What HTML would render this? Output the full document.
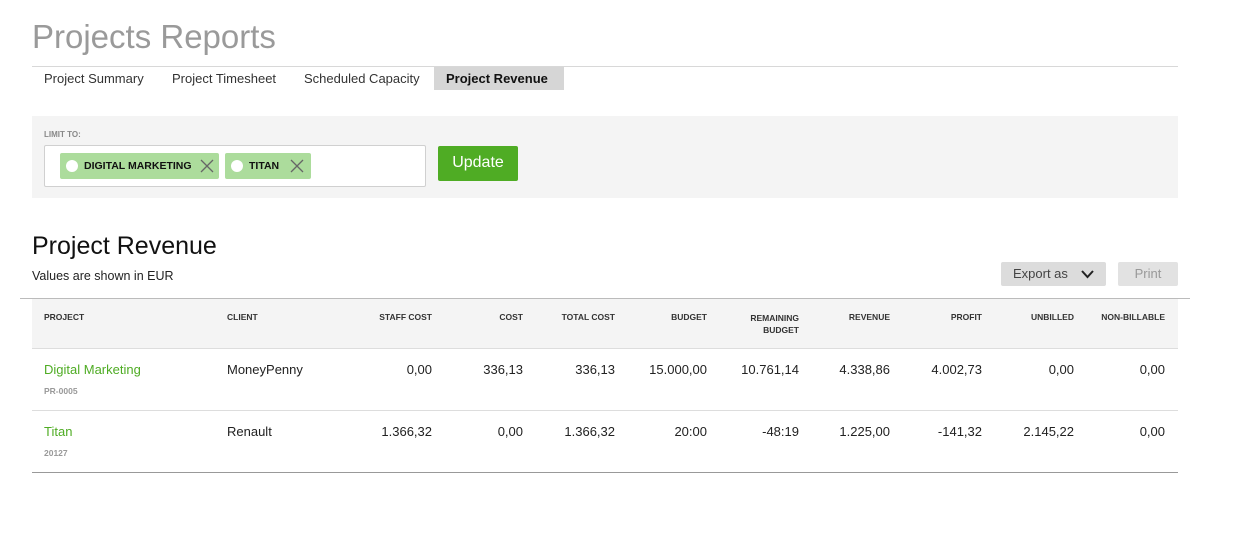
<!DOCTYPE html><html><head><style>
body{margin:0;width:1252px;height:543px;background:#fff;font-family:"Liberation Sans",sans-serif;position:relative;overflow:hidden;color:#222}
.a{position:absolute;white-space:nowrap}
.tab{top:71px;font-size:13px;color:#333}
.h{font-size:8.5px;font-weight:bold;color:#333;text-align:right;width:100px}
.c{font-size:13px;text-align:right;width:120px;color:#222}
.chip{top:153px;height:26px;background:#acdc9c;border-radius:2px}
.dot{position:absolute;left:6px;top:7px;width:12px;height:12px;border-radius:50%;background:#fff}
.ct{position:absolute;top:7px;font-size:10.5px;font-weight:bold;color:#111}
</style></head><body>
<div class="a" style="left:32px;top:18px;font-size:33px;color:#9a9a9a">Projects Reports</div>
<div class="a" style="left:32px;top:66px;width:1146px;height:1px;background:#d8d8d8"></div>
<div class="a" style="left:434px;top:67px;width:130px;height:23px;background:#d6d6d6"></div>
<div class="a tab" style="left:44px">Project Summary</div>
<div class="a tab" style="left:172px">Project Timesheet</div>
<div class="a tab" style="left:304px">Scheduled Capacity</div>
<div class="a tab" style="left:446px;font-weight:bold;color:#111">Project Revenue</div>

<div class="a" style="left:32px;top:116px;width:1146px;height:82px;background:#f4f4f4"></div>
<div class="a" style="left:44px;top:130px;font-size:8px;font-weight:bold;color:#888">LIMIT TO:</div>
<div class="a" style="left:44px;top:145px;width:380px;height:40px;background:#fff;border:1px solid #d0d0d0;border-radius:2px"></div>
<div class="a chip" style="left:60px;width:159px"><div class="dot"></div><div class="ct" style="left:24px">DIGITAL MARKETING</div>
<svg style="position:absolute;left:140px;top:6px" width="14" height="14"><path d="M1 1L13 13M13 1L1 13" stroke="#666" stroke-width="1.3"/></svg></div>
<div class="a chip" style="left:225px;width:86px"><div class="dot"></div><div class="ct" style="left:24px">TITAN</div>
<svg style="position:absolute;left:65px;top:6px" width="14" height="14"><path d="M1 1L13 13M13 1L1 13" stroke="#666" stroke-width="1.3"/></svg></div>
<div class="a" style="left:438px;top:146px;width:80px;height:35px;background:#4fac24;border-radius:2px;color:#fff;font-size:16px;text-align:center;line-height:34px">Update</div>

<div class="a" style="left:32px;top:232px;font-size:25px;color:#111">Project Revenue</div>
<div class="a" style="left:32px;top:269px;font-size:12.5px;color:#222">Values are shown in EUR</div>
<div class="a" style="left:1001px;top:262px;width:105px;height:24px;background:#dcdcdc;border-radius:2px;font-size:13px;color:#444;line-height:24px"><span style="margin-left:12px">Export as</span>
<svg style="position:absolute;left:80px;top:8px" width="13" height="9"><path d="M1 1L6.5 7L12 1" stroke="#222" stroke-width="2" fill="none"/></svg></div>
<div class="a" style="left:1118px;top:262px;width:60px;height:24px;background:#e2e2e2;border-radius:2px;font-size:13px;color:#999;line-height:24px;text-align:center">Print</div>

<div class="a" style="left:20px;top:298px;width:1170px;height:1px;background:#bbb"></div>
<div class="a" style="left:32px;top:299px;width:1146px;height:49px;background:#f4f4f4"></div>
<div class="a h" style="left:44px;top:312px;text-align:left">PROJECT</div>
<div class="a h" style="left:227px;top:312px;text-align:left">CLIENT</div>
<div class="a h" style="left:332px;top:312px">STAFF COST</div>
<div class="a h" style="left:423px;top:312px">COST</div>
<div class="a h" style="left:515px;top:312px">TOTAL COST</div>
<div class="a h" style="left:607px;top:312px">BUDGET</div>
<div class="a h" style="left:699px;top:312px;line-height:12px">REMAINING<br>BUDGET</div>
<div class="a h" style="left:790px;top:312px">REVENUE</div>
<div class="a h" style="left:882px;top:312px">PROFIT</div>
<div class="a h" style="left:974px;top:312px">UNBILLED</div>
<div class="a h" style="left:1065px;top:312px">NON-BILLABLE</div>
<div class="a" style="left:32px;top:348px;width:1146px;height:1px;background:#ddd"></div>
<div class="a" style="left:32px;top:410px;width:1146px;height:1px;background:#ddd"></div>
<div class="a" style="left:32px;top:472px;width:1146px;height:1px;background:#999"></div>

<div class="a" style="left:44px;top:362px;font-size:13px;color:#4fac24">Digital Marketing</div>
<div class="a" style="left:44px;top:386px;font-size:8.5px;font-weight:bold;color:#999">PR-0005</div>
<div class="a" style="left:227px;top:362px;font-size:13px">MoneyPenny</div>
<div class="a c" style="left:312px;top:362px">0,00</div>
<div class="a c" style="left:403px;top:362px">336,13</div>
<div class="a c" style="left:495px;top:362px">336,13</div>
<div class="a c" style="left:587px;top:362px">15.000,00</div>
<div class="a c" style="left:679px;top:362px">10.761,14</div>
<div class="a c" style="left:770px;top:362px">4.338,86</div>
<div class="a c" style="left:862px;top:362px">4.002,73</div>
<div class="a c" style="left:954px;top:362px">0,00</div>
<div class="a c" style="left:1045px;top:362px">0,00</div>

<div class="a" style="left:44px;top:424px;font-size:13px;color:#4fac24">Titan</div>
<div class="a" style="left:44px;top:448px;font-size:8.5px;font-weight:bold;color:#999">20127</div>
<div class="a" style="left:227px;top:424px;font-size:13px">Renault</div>
<div class="a c" style="left:312px;top:424px">1.366,32</div>
<div class="a c" style="left:403px;top:424px">0,00</div>
<div class="a c" style="left:495px;top:424px">1.366,32</div>
<div class="a c" style="left:587px;top:424px">20:00</div>
<div class="a c" style="left:679px;top:424px">-48:19</div>
<div class="a c" style="left:770px;top:424px">1.225,00</div>
<div class="a c" style="left:862px;top:424px">-141,32</div>
<div class="a c" style="left:954px;top:424px">2.145,22</div>
<div class="a c" style="left:1045px;top:424px">0,00</div>
</body></html>
